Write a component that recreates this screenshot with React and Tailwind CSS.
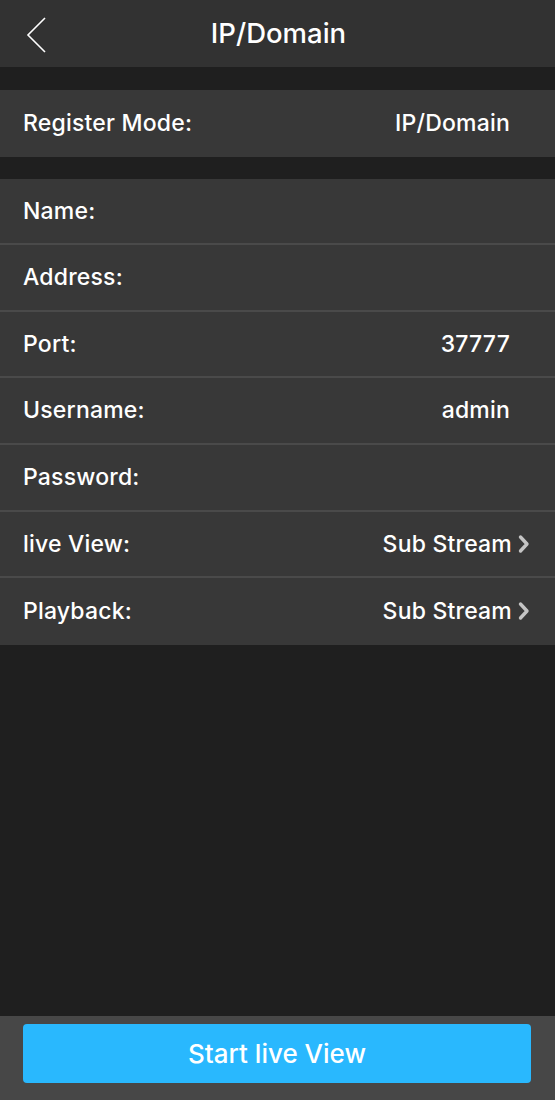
import React from "react";

const F = { fontFamily: "Inter, 'Noto Sans', 'Liberation Sans', sans-serif" };

function Chevron() {
  return (
    <svg width="14" height="22" viewBox="0 0 14 22" className="ml-[5px]">
      <path d="M3.5 4 L10 11 L3.5 18" fill="none" stroke="#c4c4c4" strokeWidth="3.4" strokeLinecap="round" strokeLinejoin="round" />
    </svg>
  );
}

function Row({ label, value, chevron, last }) {
  return (
    <div className={`flex items-center h-[66.6px] pl-[23px] ${chevron ? "pr-[24px]" : "pr-[45px]"} bg-[#383838] ${last ? "" : "border-b-2 border-[#4a4a4a]"}`}>
      <span className="text-[23px] font-medium text-white tracking-[0.2px]">{label}</span>
      <span className="ml-auto flex items-center text-[23px] font-medium text-white tracking-[0.2px]">
        {value}
        {chevron && <Chevron />}
      </span>
    </div>
  );
}

export default function App() {
  return (
    <div style={F} className="w-[555px] h-[1100px] bg-[#1f1f1f] flex flex-col">
      <div className="h-[67px] bg-[#323232] flex items-center relative shrink-0">
        <svg width="22" height="38" viewBox="0 0 22 38" className="absolute left-[26px] top-[16px]">
          <path d="M19 2 L2 19 L19 36" fill="none" stroke="#ffffff" strokeWidth="1.6" />
        </svg>
        <div className="w-full text-center text-[27.5px] font-medium text-white pl-[2px]">IP/Domain</div>
      </div>
      <div className="h-[23px] shrink-0" />
      <Row label="Register Mode:" value="IP/Domain" last />
      <div className="h-[22px] shrink-0" />
      <Row label="Name:" value="" />
      <Row label="Address:" value="" />
      <Row label="Port:" value="37777" />
      <Row label="Username:" value="admin" />
      <Row label="Password:" value="" />
      <Row label="live View:" value="Sub Stream" chevron />
      <Row label="Playback:" value="Sub Stream" chevron last />
      <div className="flex-1" />
      <div className="h-[84px] bg-[#474747] pt-[8px] px-[23px] shrink-0">
        <button className="w-[508px] h-[59px] rounded-[4px] bg-[#29b8fe] text-white text-[26px] font-medium flex items-center justify-center">
          Start live View
        </button>
      </div>
    </div>
  );
}
